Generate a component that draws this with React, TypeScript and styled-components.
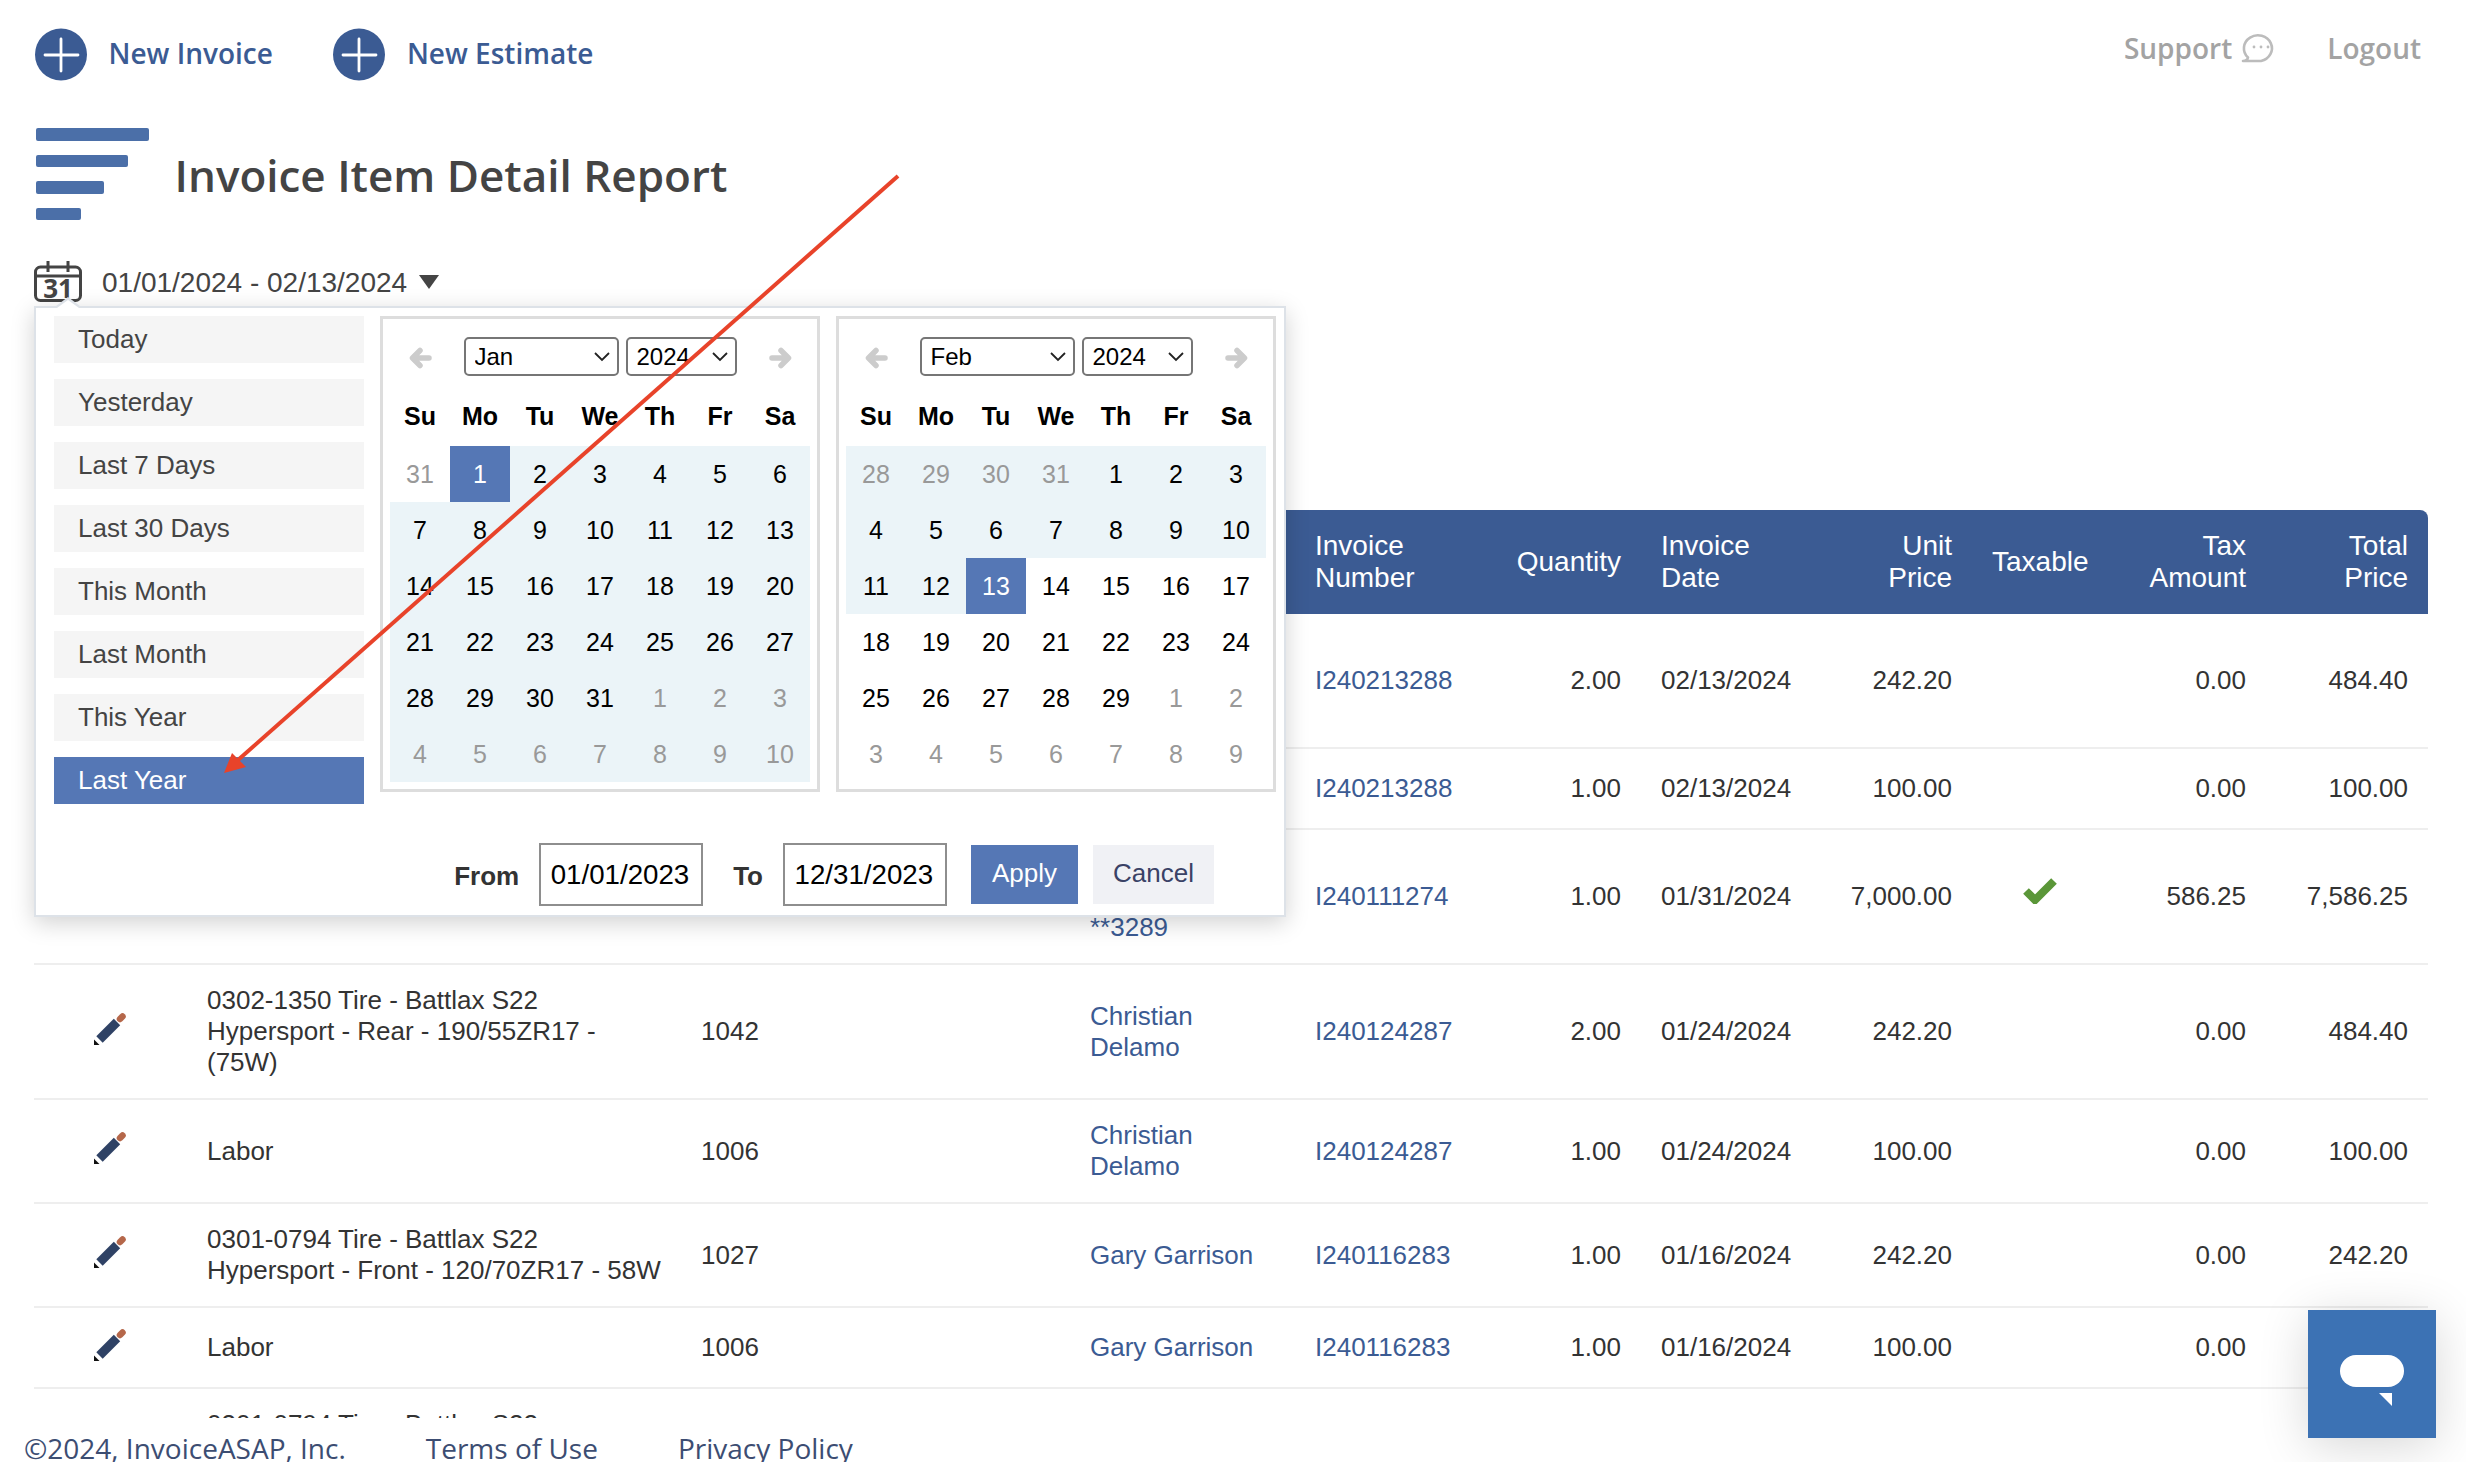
import React from 'react';
import styled, { createGlobalStyle } from 'styled-components';

const SANS = '"Liberation Sans", Arial, sans-serif';
const OPEN = '"Open Sans", "Noto Sans", sans-serif';

const Global = createGlobalStyle`
  html, body { margin: 0; padding: 0; background: #fff; }
  body { font-family: ${SANS}; overflow: hidden; }
  * { box-sizing: border-box; }
`;

const Page = styled.div`
  position: relative;
  width: 2466px;
  height: 1462px;
  overflow: hidden;
  display: flex;
  flex-direction: column;
  background: #fff;
`;

const TopBar = styled.header`
  display: flex;
  justify-content: space-between;
  align-items: center;
  height: 81px;
  padding: 28px 45px 0 35px;
`;
const Actions = styled.nav`
  display: flex;
  gap: 60.5px;
`;
const Action = styled.a`
  display: flex;
  align-items: center;
  gap: 21.5px;
  font: 600 28px/53px ${OPEN};
  color: #3b5b93;
`;
const ActionLabel = styled.span`
  line-height: 50px;
  margin-bottom: 3px;
`;
const UserLinks = styled.div`
  display: flex;
  align-items: center;
  gap: 50px;
  margin-top: -14px;
  font: 600 28px/40px ${OPEN};
  color: #a3a3a3;
`;
const SupportLink = styled.a`
  display: flex;
  align-items: center;
  gap: 9px;
`;
const TitleRow = styled.div`
  display: flex;
  align-items: center;
  gap: 25.5px;
  margin: 47px 0 0 36px;
`;
const Bars = styled.div`
  display: flex;
  flex-direction: column;
  gap: 14px;
`;
const Bar = styled.span<{ $w: number }>`
  display: block;
  width: ${p => p.$w}px;
  height: 12.5px;
  border-radius: 2px;
  background: #4b6fa8;
`;
const Title = styled.h1`
  margin: 2px 0 0;
  font: 600 44px/60px ${OPEN};
  color: #444;
`;
const DateRow = styled.div`
  display: flex;
  align-items: center;
  gap: 20px;
  margin: 41px 0 0 34px;
  height: 41px;
  font-size: 28px;
  color: #444;
`;
const DateText = styled.span`
  margin-top: 3px;
`;
const DateCaret = styled.span`
  width: 0;
  height: 0;
  margin: 0 0 0 -8.5px;
  border-left: 10px solid transparent;
  border-right: 10px solid transparent;
  border-top: 14px solid #444;
`;

const Scroller = styled.div`
  flex: 1;
  min-height: 0;
  overflow: hidden;
  margin: 208px 0 0 34px;
`;
const Table = styled.table`
  width: 2394px;
  table-layout: fixed;
  border-collapse: separate;
  border-spacing: 0;
  font-size: 26px;
  line-height: 31px;
  color: #333;
`;
const Th = styled.th<{ $align?: string }>`
  height: 104px;
  padding: 0 20px;
  background: #3b5b93;
  color: #fff;
  font-weight: 400;
  font-size: 28px;
  line-height: 32px;
  text-align: ${p => p.$align || 'left'};
  &:first-child { border-top-left-radius: 8px; }
  &:last-child { border-top-right-radius: 8px; }
`;
const Td = styled.td<{ $align?: string }>`
  height: 81px;
  padding: 20px;
  border-bottom: 2px solid #eee;
  vertical-align: middle;
  text-align: ${p => p.$align || 'left'};
`;
const EditCell = styled(Td)`
  padding: 0 0 6px 60px;
  line-height: 0;
`;
const DescCell = styled(Td)`
  padding-right: 16px;
`;
const TaxCell = styled(Td)`
  padding-top: 13px;
  padding-bottom: 27px;
  line-height: 0;
`;
const Link = styled.a`
  color: #3b5b93;
`;

const Footer = styled.footer`
  height: 44px;
  flex: none;
  display: flex;
  gap: 80px;
  padding: 14px 0 0 24px;
  overflow: hidden;
  background: #fff;
  font: 400 28px/32px ${OPEN};
  color: #3c4d72;
`;

const Popup = styled.div`
  position: absolute;
  top: 306px;
  left: 34px;
  width: 1252px;
  height: 611px;
  padding: 8px 8px 0 18px;
  background: #fff;
  border: 2px solid #dde2e8;
  box-shadow: 0 6px 22px rgba(0, 0, 0, 0.18);
  z-index: 2;
  &::before {
    content: '';
    position: absolute;
    top: -11px;
    left: 20px;
    width: 0;
    height: 0;
    border-left: 12px solid transparent;
    border-right: 12px solid transparent;
    border-bottom: 9px solid #dde2e8;
  }
  &::after {
    content: '';
    position: absolute;
    top: -8px;
    left: 21px;
    width: 0;
    height: 0;
    border-left: 11px solid transparent;
    border-right: 11px solid transparent;
    border-bottom: 8px solid #fff;
  }
`;
const PopupBody = styled.div`
  display: flex;
  gap: 16px;
  align-items: flex-start;
`;
const Ranges = styled.ul`
  width: 310px;
  flex: none;
  margin: 0;
  padding: 0;
  list-style: none;
  display: flex;
  flex-direction: column;
  gap: 16px;
`;
const RangeItem = styled.li<{ $active?: boolean }>`
  height: 47px;
  padding-left: 24px;
  font-size: 26px;
  line-height: 46px;
  background: ${p => (p.$active ? '#5577b5' : '#f5f5f5')};
  color: ${p => (p.$active ? '#fff' : '#444')};
`;
const Calendar = styled.div`
  width: 440px;
  height: 476px;
  padding: 18px 7px 0;
  border: 3px solid #ddd;
  flex: none;
`;
const CalNav = styled.div`
  display: grid;
  grid-template-columns: 60px 1fr 60px;
  height: 39px;
  align-items: center;
  justify-items: center;
  margin-bottom: 14px;
`;
const NavArrow = styled.svg`
  margin-top: 2px;
`;
const SelectGroup = styled.div`
  display: flex;
  gap: 7px;
`;
const SelectWrap = styled.div<{ $w: number }>`
  position: relative;
  width: ${p => p.$w}px;
  height: 39px;
  line-height: 0;
  svg {
    position: absolute;
    top: 15px;
    right: 9px;
    pointer-events: none;
  }
`;
const NativeSelect = styled.select`
  appearance: none;
  width: 100%;
  height: 100%;
  padding: 0 0 0 9px;
  border: 2px solid #767676;
  border-radius: 5px;
  background: #fff;
  font: 400 24px ${SANS};
  color: #000;
`;
const DayGrid = styled.div`
  display: grid;
  grid-template-columns: repeat(7, 60px);
  grid-auto-rows: 56px;
`;
const DayHead = styled.div`
  display: flex;
  align-items: center;
  justify-content: center;
  padding-bottom: 4px;
  font-weight: 700;
  font-size: 25px;
  color: #000;
`;
const Day = styled.div<{ $kind: string; $off?: boolean }>`
  display: flex;
  align-items: center;
  justify-content: center;
  font-size: 25px;
  background: ${p => (p.$kind === 'active' ? '#5577b5' : p.$kind === 'range' ? '#ebf4f8' : '#fff')};
  color: ${p => (p.$kind === 'active' ? '#fff' : p.$off ? '#999' : '#000')};
`;
const PopupFoot = styled.div`
  display: flex;
  align-items: center;
  justify-content: flex-end;
  margin: 39px 62px 0 0;
  height: 63px;
`;
const FootLabel = styled.label<{ $gap: number }>`
  margin: 4px 20px 0 ${p => p.$gap}px;
  font-weight: 700;
  font-size: 26px;
  color: #333;
`;
const DateInput = styled.input`
  width: 164px;
  height: 63px;
  padding: 0 0 0 9.5px;
  border: 2.5px solid #8e8e8e;
  border-radius: 0;
  font: 400 27.7px ${SANS};
  color: #000;
  background: #fff;
`;
const Button = styled.button<{ $w: number; $primary?: boolean }>`
  width: ${p => p.$w}px;
  height: 59px;
  margin-left: ${p => (p.$primary ? 24 : 15)}px;
  padding: 0 0 3px;
  border: 0;
  font: 400 26px ${SANS};
  background: ${p => (p.$primary ? '#5577b5' : '#f0f1f5')};
  color: ${p => (p.$primary ? '#fff' : '#3a4266')};
`;

const ChatButton = styled.div`
  position: absolute;
  right: 30px;
  bottom: 24px;
  width: 128px;
  height: 128px;
  background: #3c72b4;
  box-shadow: 0 8px 50px rgba(0, 0, 0, 0.16);
  z-index: 3;
`;
const ChatBubble = styled.span`
  position: absolute;
  top: 45px;
  left: 32px;
  width: 64px;
  height: 32px;
  border-radius: 16px;
  background: #fff;
`;
const ChatTail = styled.span`
  position: absolute;
  top: 83px;
  left: 71px;
  width: 13px;
  height: 13px;
  background: #fff;
  clip-path: polygon(0 0, 100% 0, 100% 100%);
`;
const Annotation = styled.svg`
  position: absolute;
  inset: 0;
  pointer-events: none;
  z-index: 4;
`;

const PlusIcon = () => (
  <svg width="52" height="53" viewBox="0 0 52 53">
    <circle cx="26" cy="26.5" r="26" fill="#3b5b93" />
    <path d="M26 11v32M10 27h33" stroke="#fff" strokeWidth="2.8" strokeLinecap="round" />
  </svg>
);

const SupportIcon = () => (
  <svg width="36" height="31" viewBox="0 0 36 31" fill="none">
    <path
      d="M2 29c3 0 4.500-1 5-3.500A14 13 0 1 1 20 29Z"
      stroke="#bcbcbc"
      strokeWidth="2.6"
      strokeLinejoin="round"
    />
    <circle cx="13" cy="15" r="1.400" fill="#bcbcbc" />
    <circle cx="20" cy="15" r="1.400" fill="#bcbcbc" />
    <circle cx="27" cy="15" r="1.400" fill="#bcbcbc" />
  </svg>
);

const CalendarIcon = () => (
  <svg width="48" height="41" viewBox="0 0 48 41" fill="none">
    <rect x="1.500" y="6" width="45" height="33.500" rx="5" stroke="#444" strokeWidth="3" />
    <path d="M2 15h44M14 0v11M34 0v11" stroke="#444" strokeWidth="3" />
    <text x="24" y="37" textAnchor="middle" fontFamily={OPEN} fontSize="26" fontWeight="700" fill="#444">
      31
    </text>
  </svg>
);

const PencilIcon = () => (
  <svg width="32" height="32" viewBox="0 0 32 32" fill="none">
    <path d="M0 32V26.500L5.500 32Z" fill="#111" />
    <path d="M5.500 26.500L23 9" stroke="#2f4265" strokeWidth="9" />
    <path d="M26 6L28.500 3.500" stroke="#b5674a" strokeWidth="6.500" strokeLinecap="round" />
  </svg>
);

const CheckIcon = () => (
  <svg width="36" height="28" viewBox="0 0 36 28" fill="none">
    <path d="M4 15l9 9L32 5" stroke="#5a9638" strokeWidth="8" />
  </svg>
);

const Chevron = () => (
  <svg width="16" height="10" viewBox="0 0 16 10" fill="none">
    <path d="M1 1l7 7 7-7" stroke="#222" strokeWidth="1.800" />
  </svg>
);

const ArrowLeft = () => (
  <NavArrow width="23" height="22" viewBox="0 0 23 22" fill="none">
    <path d="M20 11H5M11 3.500L3.500 11l7.500 7.500" stroke="#ccc" strokeWidth="5.500" strokeLinecap="round" strokeLinejoin="round" />
  </NavArrow>
);
const ArrowRight = () => (
  <NavArrow width="23" height="22" viewBox="0 0 23 22" fill="none">
    <path d="M3 11h15M12 3.500l7.500 7.500-7.500 7.500" stroke="#ccc" strokeWidth="5.500" strokeLinecap="round" strokeLinejoin="round" />
  </NavArrow>
);

const BARS = [113, 92, 68, 45];
const RANGES = ['Today', 'Yesterday', 'Last 7 Days', 'Last 30 Days', 'This Month', 'Last Month', 'This Year', 'Last Year'];
const WEEK = ['Su', 'Mo', 'Tu', 'We', 'Th', 'Fr', 'Sa'];

type Cal = { month: string; days: number[]; offBefore: number; kind: (i: number) => string };

const janDays = [31, ...Array.from({ length: 31 }, (_, i) => i + 1), ...Array.from({ length: 10 }, (_, i) => i + 1)];
const febDays = [28, 29, 30, 31, ...Array.from({ length: 29 }, (_, i) => i + 1), ...Array.from({ length: 9 }, (_, i) => i + 1)];

const CALENDARS: Cal[] = [
  { month: 'Jan', days: janDays, offBefore: 1, kind: i => (i === 0 ? 'none' : i === 1 ? 'active' : 'range') },
  { month: 'Feb', days: febDays, offBefore: 4, kind: i => (i < 16 ? 'range' : i === 16 ? 'active' : 'none') },
];
const LAST_INDEX = [32, 33];

const HEADERS: { label: React.ReactNode; align?: string }[] = [
  { label: '' },
  { label: 'Description' },
  { label: 'Item Number' },
  { label: 'Customer' },
  { label: <>Invoice<br />Number</> },
  { label: 'Quantity', align: 'right' },
  { label: <>Invoice<br />Date</> },
  { label: <>Unit<br />Price</>, align: 'right' },
  { label: 'Taxable', align: 'center' },
  { label: <>Tax<br />Amount</>, align: 'right' },
  { label: <>Total<br />Price</>, align: 'right' },
];

const REAR = '0302-1350 Tire - Battlax S22 Hypersport - Rear - 190/55ZR17 - (75W)';
const FRONT = '0301-0794 Tire - Battlax S22 Hypersport - Front - 120/70ZR17 - 58W';

type Row = {
  desc: string;
  item: string;
  customer: React.ReactNode;
  inv: string;
  qty: string;
  date: string;
  unit: string;
  taxable?: boolean;
  tax: string;
  total: string;
};

const ROWS: Row[] = [
  { desc: REAR, item: '1042', customer: 'Customer', inv: 'I240213288', qty: '2.00', date: '02/13/2024', unit: '242.20', tax: '0.00', total: '484.40' },
  { desc: 'Labor', item: '1006', customer: 'Customer', inv: 'I240213288', qty: '1.00', date: '02/13/2024', unit: '100.00', tax: '0.00', total: '100.00' },
  { desc: 'Service', item: '1001', customer: <>Customer<br />Card<br />**3289</>, inv: 'I240111274', qty: '1.00', date: '01/31/2024', unit: '7,000.00', taxable: true, tax: '586.25', total: '7,586.25' },
  { desc: REAR, item: '1042', customer: 'Christian Delamo', inv: 'I240124287', qty: '2.00', date: '01/24/2024', unit: '242.20', tax: '0.00', total: '484.40' },
  { desc: 'Labor', item: '1006', customer: 'Christian Delamo', inv: 'I240124287', qty: '1.00', date: '01/24/2024', unit: '100.00', tax: '0.00', total: '100.00' },
  { desc: FRONT, item: '1027', customer: 'Gary Garrison', inv: 'I240116283', qty: '1.00', date: '01/16/2024', unit: '242.20', tax: '0.00', total: '242.20' },
  { desc: 'Labor', item: '1006', customer: 'Gary Garrison', inv: 'I240116283', qty: '1.00', date: '01/16/2024', unit: '100.00', tax: '0.00', total: '100.00' },
  { desc: FRONT, item: '1027', customer: 'Gary Garrison', inv: 'I240116283', qty: '1.00', date: '01/16/2024', unit: '242.20', tax: '0.00', total: '242.20' },
];
const COLS = [153, 494, 389, 225, 185, 161, 169, 162, 136, 158, 162];

export default function App() {
  return (
    <Page>
      <Global />
      <TopBar>
        <Actions>
          <Action><PlusIcon /><ActionLabel>New Invoice</ActionLabel></Action>
          <Action><PlusIcon /><ActionLabel>New Estimate</ActionLabel></Action>
        </Actions>
        <UserLinks>
          <SupportLink>Support <SupportIcon /></SupportLink>
          <a>Logout</a>
        </UserLinks>
      </TopBar>
      <TitleRow>
        <Bars>{BARS.map(w => <Bar key={w} $w={w} />)}</Bars>
        <Title>Invoice Item Detail Report</Title>
      </TitleRow>
      <DateRow>
        <CalendarIcon />
        <DateText>01/01/2024 - 02/13/2024</DateText>
        <DateCaret />
      </DateRow>
      <Scroller>
        <Table>
          <colgroup>{COLS.map((w, i) => <col key={i} width={w} />)}</colgroup>
          <thead>
            <tr>{HEADERS.map((h, i) => <Th key={i} $align={h.align}>{h.label}</Th>)}</tr>
          </thead>
          <tbody>
            {ROWS.map((r, i) => (
              <tr key={i}>
                <EditCell><PencilIcon /></EditCell>
                <DescCell>{r.desc}</DescCell>
                <Td>{r.item}</Td>
                <Td><Link>{r.customer}</Link></Td>
                <Td><Link>{r.inv}</Link></Td>
                <Td $align="right">{r.qty}</Td>
                <Td>{r.date}</Td>
                <Td $align="right">{r.unit}</Td>
                {r.taxable ? <TaxCell $align="center"><CheckIcon /></TaxCell> : <Td />}
                <Td $align="right">{r.tax}</Td>
                <Td $align="right">{r.total}</Td>
              </tr>
            ))}
          </tbody>
        </Table>
      </Scroller>
      <Footer>
        <span>©2024, InvoiceASAP, Inc.</span>
        <a>Terms of Use</a>
        <a>Privacy Policy</a>
      </Footer>

      <Popup>
        <PopupBody>
          <Ranges>
            {RANGES.map(r => <RangeItem key={r} $active={r === 'Last Year'}>{r}</RangeItem>)}
          </Ranges>
          {CALENDARS.map((c, ci) => (
            <Calendar key={c.month}>
              <CalNav>
                <ArrowLeft />
                <SelectGroup>
                  <SelectWrap $w={155}>
                    <NativeSelect defaultValue={c.month}><option>{c.month}</option></NativeSelect>
                    <Chevron />
                  </SelectWrap>
                  <SelectWrap $w={111}>
                    <NativeSelect defaultValue="2024"><option>2024</option></NativeSelect>
                    <Chevron />
                  </SelectWrap>
                </SelectGroup>
                <ArrowRight />
              </CalNav>
              <DayGrid>
                {WEEK.map(d => <DayHead key={d}>{d}</DayHead>)}
                {c.days.map((d, i) => (
                  <Day key={i} $kind={c.kind(i)} $off={i < c.offBefore || i >= LAST_INDEX[ci]}>{d}</Day>
                ))}
              </DayGrid>
            </Calendar>
          ))}
        </PopupBody>
        <PopupFoot>
          <FootLabel $gap={0}>From</FootLabel>
          <DateInput readOnly value="01/01/2023" />
          <FootLabel $gap={30}>To</FootLabel>
          <DateInput readOnly value="12/31/2023" />
          <Button $w={107} $primary>Apply</Button>
          <Button $w={121}>Cancel</Button>
        </PopupFoot>
      </Popup>

      <ChatButton>
        <ChatBubble />
        <ChatTail />
      </ChatButton>

      <Annotation width="2466" height="1462" viewBox="0 0 2466 1462">
        <path d="M898 176L238 760" stroke="#e8432a" strokeWidth="4" fill="none" />
        <path d="M224 773L232 753L246 767Z" fill="#e8432a" />
      </Annotation>
    </Page>
  );
}
